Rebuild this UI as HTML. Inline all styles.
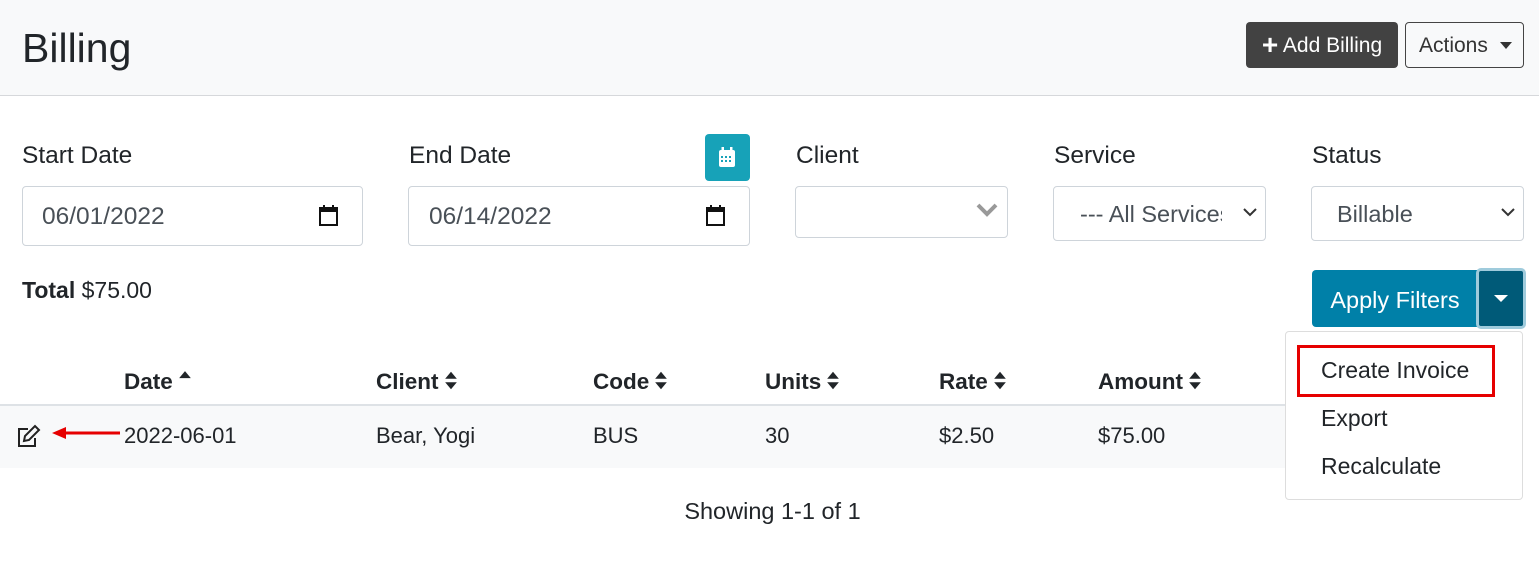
<!DOCTYPE html>
<html><head><style>
*{box-sizing:border-box;margin:0;padding:0}
body{width:1539px;height:563px;position:relative;background:#fff;font-family:"Liberation Sans",sans-serif;color:#212529;overflow:hidden}
.a{position:absolute;white-space:nowrap}
.lbl{font-size:24.5px;line-height:28px}
.box{position:absolute;border:1px solid #ced4da;border-radius:4px;background:#fff}
.th{font-size:22.5px;font-weight:bold;top:368px;line-height:28px}
.td{font-size:22px;top:422px;line-height:28px}
.sort{display:inline-block;width:14px;height:21px;vertical-align:-2px;margin-left:5px}
</style></head><body>
<div class="a" style="left:0;top:0;width:1539px;height:96px;background:#f8f9fa;border-bottom:1px solid #d6d8db"></div>
<div class="a" style="left:22px;top:24px;font-size:41px;line-height:48px">Billing</div>
<div class="a" style="left:1246px;top:22px;width:152px;height:46px;background:#424242;border-radius:4px;color:#fff;font-size:21px;line-height:46px;text-align:center"><span style="font-weight:bold;font-size:28px;vertical-align:-2px">+</span> Add Billing</div>
<div class="a" style="left:1405px;top:22px;width:119px;height:46px;border:1px solid #444;border-radius:4px;color:#333;font-size:21px;line-height:46px;padding-left:13px;background:#f8f9fa">Actions <span style="display:inline-block;border-left:6px solid transparent;border-right:6px solid transparent;border-top:7px solid #333;vertical-align:3px;margin-left:6px"></span></div>

<div class="a lbl" style="left:22px;top:142px">Start Date</div>
<div class="a lbl" style="left:409px;top:142px">End Date</div>
<div class="a lbl" style="left:796px;top:142px">Client</div>
<div class="a lbl" style="left:1054px;top:142px">Service</div>
<div class="a lbl" style="left:1312px;top:142px">Status</div>
<div class="a" style="left:705px;top:134px;width:45px;height:47px;background:#17a2b8;border-radius:4px">
<svg width="45" height="47" viewBox="0 0 45 47"><rect x="14" y="16" width="16" height="17" rx="2" fill="#fff"/><rect x="16.5" y="13" width="2.5" height="5" fill="#fff"/><rect x="25" y="13" width="2.5" height="5" fill="#fff"/><g fill="#17a2b8"><rect x="16" y="22" width="2" height="2"/><rect x="20" y="22" width="2" height="2"/><rect x="24" y="22" width="2" height="2"/><rect x="16" y="26" width="2" height="2"/><rect x="20" y="26" width="2" height="2"/><rect x="24" y="26" width="2" height="2"/></g></svg></div>

<div class="box" style="left:22px;top:186px;width:341px;height:60px"></div>
<div class="a" style="left:42px;top:203px;font-size:24.5px;color:#495057">06/01/2022</div>
<svg class="a" style="left:318px;top:204px" width="22" height="24"><rect x="2" y="4" width="17" height="17" fill="none" stroke="#111" stroke-width="2"/><rect x="2" y="4" width="17" height="4" fill="#111"/><rect x="5" y="1" width="2" height="4" fill="#111"/><rect x="14" y="1" width="2" height="4" fill="#111"/></svg>
<div class="box" style="left:408px;top:186px;width:342px;height:60px"></div>
<div class="a" style="left:429px;top:203px;font-size:24.5px;color:#495057">06/14/2022</div>
<svg class="a" style="left:705px;top:204px" width="22" height="24"><rect x="2" y="4" width="17" height="17" fill="none" stroke="#111" stroke-width="2"/><rect x="2" y="4" width="17" height="4" fill="#111"/><rect x="5" y="1" width="2" height="4" fill="#111"/><rect x="14" y="1" width="2" height="4" fill="#111"/></svg>
<div class="box" style="left:795px;top:186px;width:213px;height:52px"></div>
<svg class="a" style="left:975px;top:202px" width="24" height="16"><path d="M3 3l9 9 9-9" fill="none" stroke="#999" stroke-width="4"/></svg>
<div class="box" style="left:1053px;top:186px;width:213px;height:55px"></div>
<div class="a" style="left:1080px;top:201px;font-size:23.5px;color:#495057;width:142px;overflow:hidden">--- All Services</div>
<svg class="a" style="left:1242px;top:207px" width="16" height="12"><path d="M2 2l6 6 6-6" fill="none" stroke="#333" stroke-width="2"/></svg>
<div class="box" style="left:1311px;top:186px;width:213px;height:55px"></div>
<div class="a" style="left:1337px;top:201px;font-size:23.5px;color:#495057">Billable</div>
<svg class="a" style="left:1500px;top:207px" width="16" height="12"><path d="M2 2l6 6 6-6" fill="none" stroke="#333" stroke-width="2"/></svg>

<div class="a" style="left:22px;top:277px;font-size:23px"><b>Total</b> $75.00</div>

<div class="a" style="left:1312px;top:270px;width:166px;height:57px;background:#0080a8;border-radius:4px 0 0 4px;color:#fff;font-size:23.5px;line-height:60px;text-align:center">Apply Filters</div>
<div class="a" style="left:1476px;top:268px;width:50px;height:61px;border:3px solid #9fcbdc;border-radius:5px;background:#005a78"></div>
<div class="a" style="left:1494px;top:295px;border-left:7px solid transparent;border-right:7px solid transparent;border-top:7px solid #fff"></div>

<div class="a" style="left:1285px;top:331px;width:238px;height:169px;border:1px solid #ddd;border-radius:4px;background:#fff"></div>
<div class="a" style="left:1297px;top:345px;width:198px;height:52px;border:3px solid #e60000"></div>
<div class="a" style="left:1321px;top:357px;font-size:23px">Create Invoice</div>
<div class="a" style="left:1321px;top:405px;font-size:23px">Export</div>
<div class="a" style="left:1321px;top:453px;font-size:23px">Recalculate</div>

<div class="a th" style="left:124px">Date<svg class="sort" viewBox="0 0 12 18"><path d="M1 7l5-6 5 6z" fill="#212529"/></svg></div>
<div class="a th" style="left:376px">Client<svg class="sort" viewBox="0 0 12 18"><path d="M1 7.5l5-6 5 6zM1 10.5l5 6 5-6z" fill="#212529"/></svg></div>
<div class="a th" style="left:593px">Code<svg class="sort" viewBox="0 0 12 18"><path d="M1 7.5l5-6 5 6zM1 10.5l5 6 5-6z" fill="#212529"/></svg></div>
<div class="a th" style="left:765px">Units<svg class="sort" viewBox="0 0 12 18"><path d="M1 7.5l5-6 5 6zM1 10.5l5 6 5-6z" fill="#212529"/></svg></div>
<div class="a th" style="left:939px">Rate<svg class="sort" viewBox="0 0 12 18"><path d="M1 7.5l5-6 5 6zM1 10.5l5 6 5-6z" fill="#212529"/></svg></div>
<div class="a th" style="left:1098px">Amount<svg class="sort" viewBox="0 0 12 18"><path d="M1 7.5l5-6 5 6zM1 10.5l5 6 5-6z" fill="#212529"/></svg></div>

<div class="a" style="left:0;top:404px;width:1285px;height:64px;background:#f8f9fa;border-top:2px solid #dee2e6"></div>
<svg class="a" style="left:16px;top:424px" width="28" height="26"><path d="M12 5H3v17h16v-8" fill="none" stroke="#222" stroke-width="2"/><path d="M8 17l1-5 10-10 4 4-10 10z" fill="none" stroke="#222" stroke-width="2"/></svg>
<svg class="a" style="left:50px;top:426px" width="72" height="14"><path d="M70 7H14" stroke="#e60000" stroke-width="3"/><path d="M2 7l14-6v12z" fill="#e60000"/></svg>
<div class="a td" style="left:124px">2022-06-01</div>
<div class="a td" style="left:376px">Bear, Yogi</div>
<div class="a td" style="left:593px">BUS</div>
<div class="a td" style="left:765px">30</div>
<div class="a td" style="left:939px">$2.50</div>
<div class="a td" style="left:1098px">$75.00</div>

<div class="a" style="left:0;width:1545px;top:498px;text-align:center;font-size:23.5px">Showing 1-1 of 1</div>
</body></html>
